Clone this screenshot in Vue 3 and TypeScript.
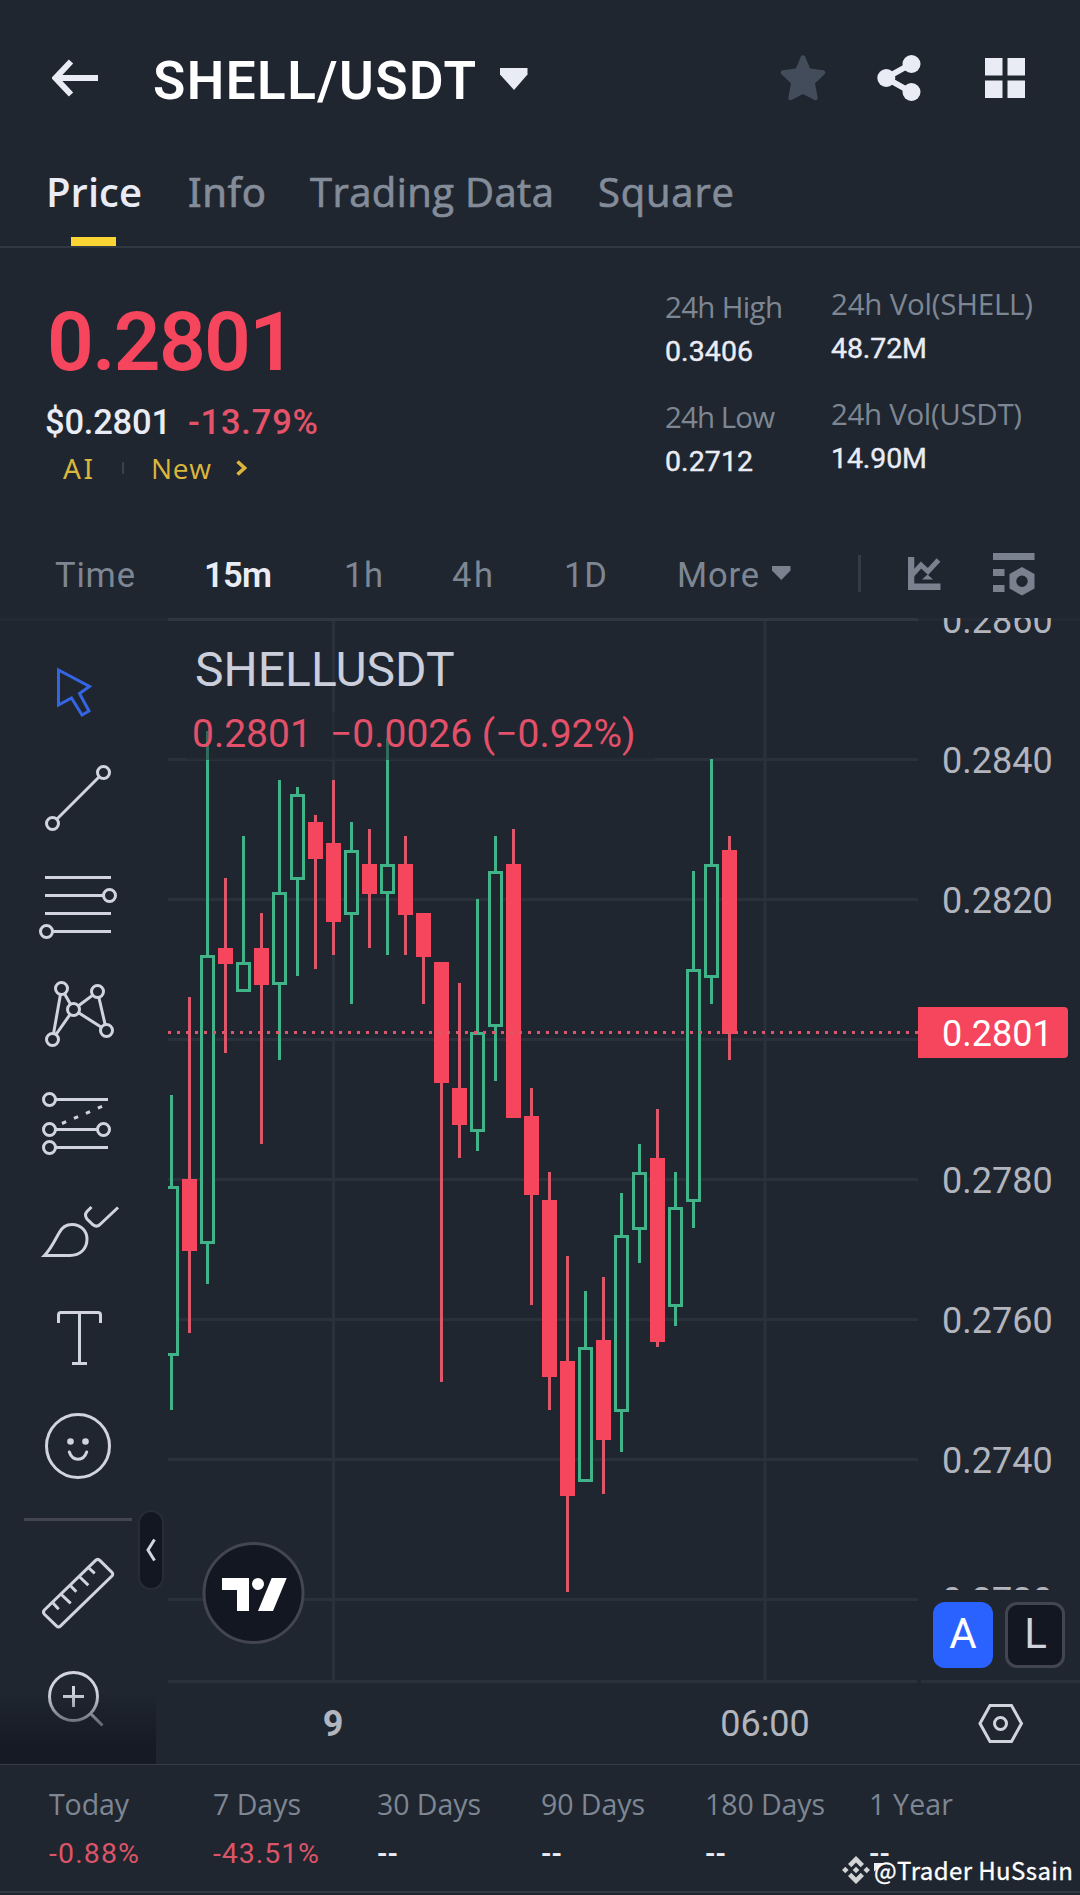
<script setup lang="ts">
import type { Directive } from 'vue'

interface Tab { label: string; width: number; active?: boolean; slab?: boolean }
interface Stat { label: string; labelWidth: number; value: string; valueWidth: number }
interface Interval { label: string; width: number; active?: boolean }
interface Period { label: string; labelWidth: number; value: string; valueWidth: number; down?: boolean }
type Candle = [open: number, high: number, low: number, close: number]

// Tracks a label out (or in) so that it fills the given width.
const vFit: Directive<HTMLElement, number> = {
  mounted(el, { value }) {
    const count = (el.textContent ?? '').length
    const natural = el.getBoundingClientRect().width
    if (count > 1) el.style.letterSpacing = `${(value - natural) / (count - 1)}px`
    el.style.width = `${value}px`
  },
}

const tabs: Tab[] = [
  { label: 'Price', width: 96, active: true },
  { label: 'Info', width: 78, slab: true },
  { label: 'Trading Data', width: 244 },
  { label: 'Square', width: 136 },
]

const pairStats: Stat[][] = [
  [
    { label: '24h High', labelWidth: 118, value: '0.3406', valueWidth: 88 },
    { label: '24h Low', labelWidth: 110, value: '0.2712', valueWidth: 88 },
  ],
  [
    { label: '24h Vol(SHELL)', labelWidth: 202, value: '48.72M', valueWidth: 96 },
    { label: '24h Vol(USDT)', labelWidth: 191, value: '14.90M', valueWidth: 96 },
  ],
]

const intervals: Interval[] = [
  { label: 'Time', width: 80 },
  { label: '15m', width: 68, active: true },
  { label: '1h', width: 39 },
  { label: '4h', width: 41 },
  { label: '1D', width: 43 },
  { label: 'More', width: 82 },
]

const periods: Period[] = [
  { label: 'Today', labelWidth: 80, value: '-0.88%', valueWidth: 90, down: true },
  { label: '7 Days', labelWidth: 88, value: '-43.51%', valueWidth: 106, down: true },
  { label: '30 Days', labelWidth: 104, value: '--', valueWidth: 21 },
  { label: '90 Days', labelWidth: 104, value: '--', valueWidth: 21 },
  { label: '180 Days', labelWidth: 120, value: '--', valueWidth: 21 },
  { label: '1 Year', labelWidth: 84, value: '--', valueWidth: 21 },
]

// Prices are in units of 0.0001.
const candles: Candle[] = [
  [2755, 2792, 2747, 2779], [2780, 2806, 2758, 2770], [2771, 2844, 2765, 2812], [2813, 2823, 2798, 2811],
  [2807, 2829, 2807, 2811], [2813, 2818, 2785, 2808], [2808, 2837, 2797, 2821], [2823, 2836, 2809, 2835],
  [2831, 2832, 2810, 2826], [2828, 2837, 2812, 2817], [2818, 2831, 2805, 2827], [2825, 2830, 2813, 2821],
  [2821, 2843, 2812, 2825], [2825, 2829, 2812, 2818], [2818, 2818, 2805, 2812], [2811, 2811, 2751, 2794],
  [2793, 2808, 2783, 2788], [2787, 2820, 2784, 2801], [2802, 2829, 2794, 2824], [2825, 2830, 2789, 2789],
  [2789, 2793, 2762, 2778], [2777, 2781, 2747, 2752], [2754, 2769, 2721, 2735], [2737, 2764, 2737, 2756],
  [2757, 2766, 2735, 2743], [2747, 2778, 2741, 2772], [2773, 2785, 2768, 2781], [2783, 2790, 2756, 2757],
  [2762, 2781, 2759, 2776], [2777, 2824, 2773, 2810], [2809, 2840, 2805, 2825], [2827, 2829, 2797, 2801],
]

const yOf = (price: number): number => 760 + (2840 - price) * 7
const xOf = (index: number): number => 171.5 + index * 18

const bars = candles.map(([open, high, low, close], i) => {
  const up = close > open
  const top = yOf(Math.max(open, close)) - 1
  const bottom = yOf(Math.min(open, close)) + 1
  return { x: xOf(i), up, top, bottom, high: yOf(high) - 1, low: yOf(low) - 1 }
})

const gridPrices: number[] = [2840, 2820, 2800, 2780, 2760, 2740, 2720]
const axisPrices: number[] = [2860, 2840, 2820, 2780, 2760, 2740, 2720]
const priceText = (price: number): string => (price / 10000).toFixed(4)
</script>

<template>
  <main class="screen">
    <header class="header">
      <svg class="back" width="46" height="38" viewBox="0 0 46 38">
        <path d="M19 2.5 3.5 19 19 35.5M4 19H46" fill="none" stroke="#eaecf5" stroke-width="6" />
      </svg>
      <h1 v-fit="323" class="pair">SHELL/USDT</h1>
      <svg class="caret" width="28" height="22" viewBox="0 0 28 22">
        <path d="M0 0H27.5V6.5L14 22 0 6.5Z" fill="#eaecf5" />
      </svg>
      <svg class="star" width="46" height="48" viewBox="0 0 46 48">
        <path d="M23 3.500 28.500 16.500 43 18.500 32.500 28.500 35.500 44 23 37.500 10.500 44 13.500 28.500 3 18.500 17.500 16.500Z" fill="#434c5a" stroke="#434c5a" stroke-width="4.500" stroke-linejoin="round" />
      </svg>
      <svg class="share" width="44" height="48" viewBox="0 0 44 48">
        <path d="M34 10 9 24 34 38" fill="none" stroke="#eaecf5" stroke-width="6" />
        <circle cx="34.500" cy="10" r="9" fill="#eaecf5" />
        <circle cx="9.300" cy="24" r="9" fill="#eaecf5" />
        <circle cx="34.500" cy="38" r="9" fill="#eaecf5" />
      </svg>
      <svg class="apps" width="40" height="40" viewBox="0 0 40 40">
        <path d="M0 0H17.500V17.500H0ZM22.500 0H40V17.500H22.500ZM0 22.500H17.500V40H0ZM22.500 22.500H40V40H22.500Z" fill="#eaecf5" />
      </svg>
    </header>

    <nav class="tabs">
      <div v-for="tab in tabs" :key="tab.label" class="tab" :class="{ active: tab.active, slab: tab.slab }">
        <span v-fit="tab.width" class="fit">{{ tab.label }}</span>
      </div>
    </nav>

    <section class="summary">
      <div class="quote">
        <div class="last"><span v-fit="249" class="fit">0.2801</span></div>
        <div class="change">
          <span v-fit="126" class="fit fiat">$0.2801</span>
          <span v-fit="130" class="fit percent">-13.79%</span>
        </div>
        <div class="tags">
          <span v-fit="30" class="fit ai">AI</span>
          <i class="tag-divider"></i>
          <span v-fit="60" class="fit new">New</span>
          <svg width="11" height="16" viewBox="0 0 11 16">
            <path d="M1.500 1.500 8.500 8 1.500 14.500" fill="none" stroke="#dcb63c" stroke-width="3.600" />
          </svg>
        </div>
      </div>
      <div v-for="(column, c) in pairStats" :key="c" class="stats">
        <div v-for="stat in column" :key="stat.label" class="stat">
          <div class="stat-label"><span v-fit="stat.labelWidth" class="fit">{{ stat.label }}</span></div>
          <div class="stat-value"><span v-fit="stat.valueWidth" class="fit">{{ stat.value }}</span></div>
        </div>
      </div>
    </section>

    <nav class="intervals">
      <div v-for="item in intervals" :key="item.label" class="interval" :class="{ active: item.active }">
        <span v-fit="item.width" class="fit">{{ item.label }}</span>
      </div>
      <svg class="more-caret" width="19" height="14" viewBox="0 0 19 14">
        <path d="M0 0H18.500V4.500L9.300 14 0 4.500Z" fill="#7a818f" />
      </svg>
      <i class="bar-divider"></i>
      <svg class="indicator" width="33" height="33" viewBox="0 0 33 33">
        <path d="M0 0H6.300V26.500H32.500V33H0Z" fill="#7a818f" />
        <path d="M4 18 13 8 20 14.500 30.500 3" fill="none" stroke="#7a818f" stroke-width="5" />
        <path d="M14 22.500 19.500 17.500 25 22.500Z" fill="#7a818f" />
      </svg>
      <svg class="settings" width="42" height="43" viewBox="0 0 42 43">
        <path d="M0 0H41.500V7H0ZM0 16H11.500V23H0ZM0 32H11.500V39H0Z" fill="#7a818f" />
        <path fill-rule="evenodd" d="M29 14 41.500 21V35.500L29 42.500 16.500 35.500V21ZM29 22.500A5.700 5.700 0 1 0 29 34 5.700 5.700 0 1 0 29 22.500Z" fill="#7a818f" />
      </svg>
    </nav>

    <section class="chart-area">
      <aside class="toolbar">
        <div class="tool">
          <svg viewBox="0 0 84 84">
            <path class="blue" d="M22.500 22 53.500 38.500 43.500 45.500 53 63 46 67 35.500 50 22.500 57Z" />
          </svg>
        </div>
        <div class="tool">
          <svg viewBox="0 0 84 84">
            <path d="M21 63 63 21" /><circle cx="67.500" cy="16.500" r="6" /><circle cx="16.500" cy="67.500" r="6" />
          </svg>
        </div>
        <div class="tool">
          <svg viewBox="0 0 84 84">
            <path d="M9 13.500H75M9 31.500H67M9 49.500H75M17 67.500H75" />
            <circle cx="73.500" cy="31.500" r="6" /><circle cx="10.500" cy="67.500" r="6" />
          </svg>
        </div>
        <div class="tool">
          <svg viewBox="0 0 84 84">
            <path d="M16.500 67.500 25.500 16.500 37.500 37.500 16.500 67.500M37.500 37.500 61.500 19.500 70.500 58.500 37.500 37.500" />
            <circle cx="25.500" cy="16.500" r="6" /><circle cx="61.500" cy="19.500" r="6" /><circle cx="37.500" cy="37.500" r="6" />
            <circle cx="16.500" cy="67.500" r="6" /><circle cx="70.500" cy="58.500" r="6" />
          </svg>
        </div>
        <div class="tool">
          <svg viewBox="0 0 84 84">
            <path d="M20 19.500H72M20 49.500H61M20 67.500H72" />
            <path d="M26 43.500 67 26" stroke-dasharray="4.500 8.500" />
            <circle cx="13.500" cy="19.500" r="6" /><circle cx="13.500" cy="49.500" r="6" />
            <circle cx="67.500" cy="49.500" r="6" /><circle cx="13.500" cy="67.500" r="6" />
          </svg>
        </div>
        <div class="tool">
          <svg viewBox="0 0 84 84">
            <path d="M8.500 67.500C15 61 19 52 23 45 26 39 30 36.500 36 36.500 45 36.500 51 43 51 51 51 61 44 67.500 34 67.500Z" />
            <path d="M55.500 19 51 23.500Q48 27 51 31L57 36.800Q60.500 39.500 64 36.500L82 19.500" />
          </svg>
        </div>
        <div class="tool">
          <svg viewBox="0 0 84 84">
            <path d="M22.500 27V19Q22.500 16.500 25 16.500H62Q64.500 16.500 64.500 19V27M43.500 16.500V67.500M36 67.500H51" />
          </svg>
        </div>
        <div class="tool">
          <svg viewBox="0 0 84 84">
            <circle cx="42" cy="42" r="31.500" />
            <circle class="dot" cx="34.500" cy="37.500" r="3.300" /><circle class="dot" cx="49.500" cy="37.500" r="3.300" />
            <path d="M33.300 48C35 53 38.500 55.200 42 55.200S49 53 50.700 48" stroke-linecap="round" />
          </svg>
        </div>
        <hr class="tool-divider" />
        <div class="tool">
          <svg viewBox="0 0 84 84">
            <path d="M59.600 9.400Q61.700 7.300 63.800 9.400L75.700 21.100Q77.800 23.200 75.700 25.300L24.600 74.900Q22.500 77 20.400 74.900L8.400 63.200Q6.500 61.100 8.400 59Z" />
            <path d="M17 52 22.700 58.300M25.300 43.500 34.700 52.300M34.300 34.500 40.300 40.700M43.300 25.500 52.300 34.300M52.300 16.500 58.700 22.300" />
          </svg>
        </div>
        <div class="tool">
          <svg viewBox="0 0 84 84">
            <circle cx="37.500" cy="37.500" r="24" /><path d="M27 37.500H48M37.500 27V48M55 55 66.500 66.500" />
          </svg>
        </div>
        <div class="fade"></div>
        <button class="collapse" type="button">
          <svg width="12" height="24" viewBox="0 0 12 24">
            <path d="M9.500 1.500 3 12 9.500 22.500" fill="none" stroke="#d1d4dc" stroke-width="3" />
          </svg>
        </button>
      </aside>

      <svg class="chart" width="912" height="1146" viewBox="168 618 912 1146">
        <defs>
          <clipPath id="axis-clip"><rect x="918" y="618" width="162" height="972" /></clipPath>
        </defs>
        <g stroke="#2a313b" stroke-width="3">
          <path v-for="p in gridPrices" :key="p" :d="`M168 ${yOf(p) - 0.5}H918`" />
          <path d="M333.500 618V1680M765 618V1680" />
          <path d="M168 1681.500H917M921 1681.500H1080" />
          <path d="M918 619.500H1080" stroke="#232a33" />
          <path d="M168 619.500H918" stroke="#2f3640" />
        </g>

        <g v-for="bar in bars" :key="bar.x">
          <path :d="`M${bar.x} ${bar.high}V${bar.top}M${bar.x} ${bar.bottom}V${Math.max(bar.low, bar.bottom)}`" :class="bar.up ? 'wick-up' : 'wick-down'" />
          <rect v-if="bar.up" class="body-up" :x="bar.x - 6" :y="bar.top + 1.5" width="12" :height="bar.bottom - bar.top - 3" />
          <rect v-else class="body-down" :x="bar.x - 7.5" :y="bar.top" width="15" :height="bar.bottom - bar.top" />
        </g>

        <path d="M168 1032.500H918" stroke="#de5669" stroke-width="3" stroke-dasharray="3 6" />

        <rect x="187" y="712" width="468" height="48" fill="#1f262f" fill-opacity=".5" />
        <text class="symbol" x="195" y="685.500">SHELLUSDT</text>
        <text class="legend" x="192" y="747">0.2801</text>
        <text class="legend" x="330" y="747">−0.0026 (−0.92%)</text>

        <g class="axis" clip-path="url(#axis-clip)">
          <text v-for="p in axisPrices" :key="p" x="942" :y="yOf(p) + 13">{{ priceText(p) }}</text>
        </g>
        <path d="M918 1007H1064Q1068 1007 1068 1011V1054Q1068 1058 1064 1058H918Z" fill="#f6465d" />
        <text class="axis now" x="942" y="1046">0.2801</text>

        <text class="axis day" x="333" y="1735.500" text-anchor="middle">9</text>
        <text class="axis" x="765" y="1735.500" text-anchor="middle">06:00</text>

        <rect x="933" y="1602" width="60" height="66" rx="12" fill="#2962ff" />
        <text class="mode" x="963" y="1648" text-anchor="middle" fill="#fff">A</text>
        <rect x="1006.500" y="1603.500" width="57" height="63" rx="10.500" fill="#131722" stroke="#434651" stroke-width="3" />
        <text class="mode" x="1035.500" y="1648" text-anchor="middle" fill="#d1d4dc">L</text>

        <g fill="none" stroke="#d1d4dc" stroke-width="3">
          <path d="M990 1705.500H1011.500L1021.500 1723.500 1011.500 1741.500H990L980 1723.500Z" />
          <circle cx="1000.500" cy="1723.500" r="6" />
        </g>

        <circle cx="253.500" cy="1593" r="49.500" fill="#131722" stroke="#434651" stroke-width="3" />
        <path d="M222 1578H249V1611H237V1590H222ZM271.700 1578H286.700L273 1611H258Z" fill="#fff" />
        <circle cx="258" cy="1584" r="6" fill="#fff" />
      </svg>
    </section>

    <footer class="periods">
      <div v-for="period in periods" :key="period.label" class="period">
        <div class="period-label"><span v-fit="period.labelWidth" class="fit">{{ period.label }}</span></div>
        <div class="period-value" :class="period.down ? 'down' : 'empty'"><span v-fit="period.valueWidth" class="fit">{{ period.value }}</span></div>
      </div>
      <svg class="marker" width="10" height="10" viewBox="0 0 10 10">
        <path d="M0 0H10L0 8.500Z" fill="#eaecf5" />
      </svg>
      <div class="credit">
        <svg width="28" height="28" viewBox="0 0 28 28">
          <path d="M14 0 22 8 18.700 11.300 14 6.600 9.300 11.300 6 8ZM3.300 10.700 6.600 14 3.300 17.300 0 14ZM14 10.700 17.300 14 14 17.300 10.700 14ZM24.700 10.700 28 14 24.700 17.300 21.400 14ZM6 20 9.300 16.700 14 21.400 18.700 16.700 22 20 14 28Z" fill="#d2d3d5" />
        </svg>
        <span v-fit="199" class="fit">@Trader HuSsain</span>
      </div>
    </footer>
  </main>
</template>

<style>
body {
  margin: 0;
  background: #1f262f;
}
</style>

<style scoped>
.screen {
  width: 1080px;
  height: 1895px;
  overflow: hidden;
  background: #1f262f;
  color: #eaecf5;
  font-family: "Open Sans", "Noto Sans", sans-serif;
}
svg { display: block; flex: none; }
.fit {
  display: inline-block;
  white-space: nowrap;
}
.header {
  display: flex;
  align-items: center;
  height: 156px;
  padding: 0 55px 0 52px;
}
.pair {
  margin: 5px 0 0 55px;
  font: 600 53px/60px Roboto, sans-serif;
  white-space: nowrap;
  color: #fff;
}
.caret { margin: 2px 0 0 24px; }
.star { margin-left: auto; }
.share { margin-left: 51px; }
.apps { margin-left: 64px; }

.tabs {
  display: flex;
  gap: 44px;
  box-sizing: border-box;
  height: 92px;
  padding-left: 46px;
  border-bottom: 2px solid #313842;
}
.tab {
  position: relative;
  height: 90px;
  font-size: 40px;
  line-height: 71px;
  color: #848c99;
  -webkit-text-stroke: .7px #848c99;
}
.tab.slab {
  margin-left: 2px;
  font-family: "Noto Sans", sans-serif;
}
.tab.active {
  color: #eaecf5;
  font-weight: 600;
  -webkit-text-stroke: 0;
}
.tab.active::after {
  content: "";
  position: absolute;
  bottom: 0;
  left: 25px;
  width: 45px;
  height: 9px;
  background: #fcd535;
}

.summary {
  display: flex;
  height: 284px;
}
.quote {
  width: 665px;
  box-sizing: border-box;
  padding: 44px 0 0 45px;
}
.last {
  height: 100px;
  padding-left: 2px;
  font: 600 82px/100px Roboto, sans-serif;
  color: #f6465d;
}
.change {
  display: flex;
  gap: 17px;
  margin-top: 10px;
  font: 500 34.500px/40px Roboto, sans-serif;
}
.percent { color: #e4536a; }
.tags {
  display: flex;
  align-items: center;
  margin: 9px 0 0 18px;
  font-size: 28px;
  line-height: 34px;
  color: #dcb63c;
}
.ai { font-family: "Noto Sans", sans-serif; }
.tag-divider {
  width: 2px;
  height: 12px;
  margin: 0 27px 0 29px;
  background: #3a414d;
}
.new { margin-right: 25px; }
.stats { padding-top: 38.500px; }
.stats + .stats {
  margin-left: 48px;
  padding-top: 35.500px;
}
.stat { height: 110px; }
.stat-label {
  height: 45px;
  font-size: 29.500px;
  line-height: 40px;
  color: #7e8693;
}
.stat-value {
  font: 400 28.500px/40px Roboto, sans-serif;
  -webkit-text-stroke: .4px #eaecf5;
}

.intervals {
  display: flex;
  align-items: center;
  height: 86px;
  padding-left: 55px;
}
.interval {
  font: 400 34.500px/90px Roboto, sans-serif;
  color: #7e8693;
}
.interval.active { font-weight: 600; color: #eaecf5; }
.interval:nth-child(2) { margin-left: 69px; }
.interval:nth-child(3) { margin-left: 72px; }
.interval:nth-child(4) { margin-left: 69px; }
.interval:nth-child(5) { margin-left: 71px; }
.interval:nth-child(6) { margin-left: 70px; }
.more-caret { margin: -4px 0 0 13px; }
.bar-divider {
  width: 3px;
  height: 37px;
  margin: -4px 0 0 67px;
  background: #343b47;
}
.indicator { margin: -4px 0 0 47px; }
.settings { margin: -2px 0 0 52px; }

.chart-area {
  display: flex;
  height: 1146px;
}
.toolbar {
  position: relative;
  box-sizing: border-box;
  width: 168px;
  padding-top: 15px;
  border-top: 3px solid #232a33;
}
.tool {
  display: flex;
  align-items: center;
  height: 108px;
  padding-left: 36px;
}
.tool svg {
  width: 84px;
  height: 84px;
  fill: none;
  stroke: #d1d4e0;
  stroke-width: 3;
}
.tool circle { fill: #1f262f; }
.tool .dot { fill: #d1d4e0; stroke: none; }
.tool .blue { stroke: #3465e4; }
.tool-divider {
  width: 108px;
  height: 3px;
  margin: 18px 0 18px 24px;
  border: 0;
  background: #434651;
}
.fade {
  position: absolute;
  left: 0;
  bottom: 0;
  width: 156px;
  height: 72px;
  background: linear-gradient(rgba(19, 23, 34, 0), rgba(21, 25, 36, .95) 75%);
}
.collapse {
  position: absolute;
  left: 138px;
  top: 889px;
  display: flex;
  align-items: center;
  justify-content: center;
  box-sizing: border-box;
  width: 26px;
  height: 80px;
  padding: 0;
  border: 2px solid #272d38;
  border-radius: 13px;
  background: #131722;
}
.wick-up { stroke: #41b389; stroke-width: 3; }
.wick-down { stroke: #de5669; stroke-width: 3; }
.body-up { fill: #1f262f; stroke: #41b389; stroke-width: 3; }
.body-down { fill: #f6465d; }
.chart text { font-family: Roboto, sans-serif; }
.symbol { font-size: 48px; fill: #cbcedb; }
.legend { font-size: 39px; fill: #e2506a; }
.axis { font-size: 36px; fill: #b2b5be; }
.now { fill: #fff; }
.day { font-weight: 700; }
.mode { font-size: 42px; }

.periods {
  position: relative;
  display: flex;
  box-sizing: border-box;
  height: 129px;
  padding: 19px 0 0 49px;
  border-top: 1px solid #353b46;
  border-bottom: 2px solid #313842;
}
.period { width: 164px; }
.period-label {
  height: 50px;
  font-size: 28.500px;
  line-height: 40px;
  color: #7e8693;
}
.period-value {
  font: 400 28.500px/40px Roboto, sans-serif;
  color: #eaecf5;
}
.period-value.down { color: #dc5468; }
.period-value.empty { font-weight: 600; }
.marker {
  position: absolute;
  left: 874px;
  top: 98px;
}
.credit {
  position: absolute;
  left: 842px;
  top: 88px;
  display: flex;
  align-items: center;
  gap: 4px;
  font: 400 24px/34px "Noto Sans CJK SC", sans-serif;
  color: #fff;
  -webkit-text-stroke: .3px #fff;
}
</style>
